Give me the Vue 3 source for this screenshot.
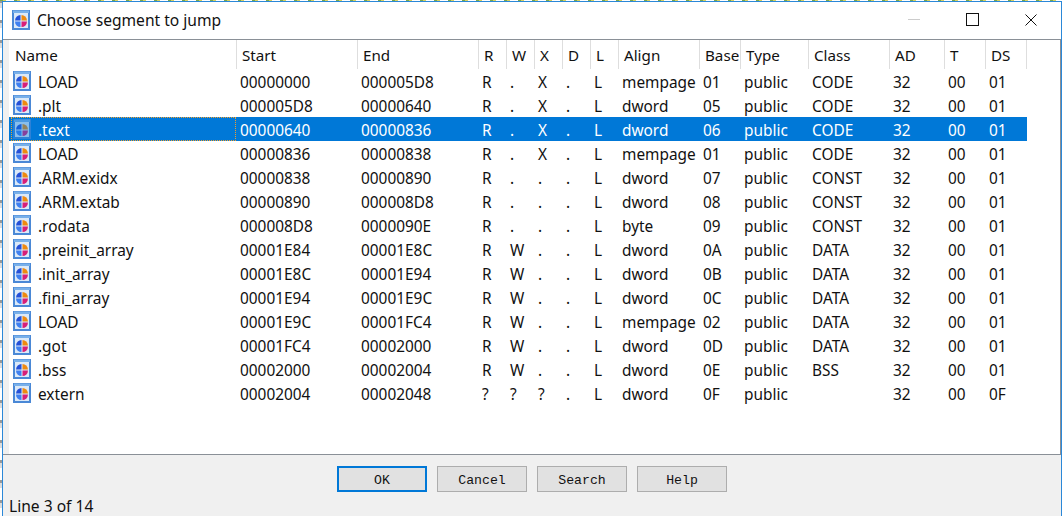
<script setup>
const columns = ['Name', 'Start', 'End', 'R', 'W', 'X', 'D', 'L', 'Align', 'Base', 'Type', 'Class', 'AD', 'T', 'DS']
const raw = `LOAD 00000000 000005D8 R . X . L mempage 01 public CODE 32 00 01
.plt 000005D8 00000640 R . X . L dword 05 public CODE 32 00 01
.text 00000640 00000836 R . X . L dword 06 public CODE 32 00 01
LOAD 00000836 00000838 R . X . L mempage 01 public CODE 32 00 01
.ARM.exidx 00000838 00000890 R . . . L dword 07 public CONST 32 00 01
.ARM.extab 00000890 000008D8 R . . . L dword 08 public CONST 32 00 01
.rodata 000008D8 0000090E R . . . L byte 09 public CONST 32 00 01
.preinit_array 00001E84 00001E8C R W . . L dword 0A public DATA 32 00 01
.init_array 00001E8C 00001E94 R W . . L dword 0B public DATA 32 00 01
.fini_array 00001E94 00001E9C R W . . L dword 0C public DATA 32 00 01
LOAD 00001E9C 00001FC4 R W . . L mempage 02 public DATA 32 00 01
.got 00001FC4 00002000 R W . . L dword 0D public DATA 32 00 01
.bss 00002000 00002004 R W . . L dword 0E public BSS 32 00 01
extern 00002004 00002048 ? ? ? . L dword 0F public - 32 00 0F`
const rows = raw.split('\n').map((l) => l.split(' ').map((c) => (c === '-' ? '' : c)))
const buttons = ['OK', 'Cancel', 'Search', 'Help']
</script>

<template>
  <div class="desk">
    <svg class="defs" width="0" height="0" aria-hidden="true">
      <symbol id="seg" viewBox="0 0 18 20">
        <rect x="0" y="0" width="18" height="20" fill="#4a88d6" />
        <rect x="1" y="0.5" width="16" height="2.5" fill="#78b0ea" />
        <rect x="2" y="3" width="14" height="15" fill="#dbe9f8" />
        <path d="M8.5 5A5.5 6 0 0 0 3 10.5h5.5z" fill="#2450d8" />
        <path d="M9.5 5A5.5 6 0 0 1 15 10.5H9.5z" fill="#ee8a10" />
        <path d="M8.5 11.5H3A5.5 5.5 0 0 0 8.5 17z" fill="#3f80f0" />
        <path d="M9.5 11.5H15A5.5 5.5 0 0 1 9.5 17z" fill="#d81f78" />
      </symbol>
    </svg>
    <div class="window">
      <header class="title">
        <svg class="icon"><use href="#seg" /></svg>
        <span class="title-text">Choose segment to jump</span>
        <div class="controls">
          <span class="minimize"></span>
          <span class="maximize"></span>
          <svg class="close" width="12" height="12" viewBox="0 0 12 12">
            <path d="M0.5 0.5L11.5 11.5M11.5 0.5L0.5 11.5" stroke="#111" stroke-width="1" fill="none" />
          </svg>
        </div>
      </header>

      <main class="list">
        <div class="grid head">
          <span v-for="c in columns" :key="c" class="hcell">{{ c }}</span>
        </div>
        <div v-for="(r, i) in rows" :key="i" class="grid row" :class="{ selected: i === 2 }">
          <span class="name">
            <svg class="icon small"><use href="#seg" /></svg>
            <span class="label">{{ r[0] }}</span>
          </span>
          <span v-for="(c, j) in r.slice(1)" :key="j" class="cell">{{ c }}</span>
        </div>
      </main>

      <footer class="footer">
        <div class="buttons">
          <button v-for="(b, i) in buttons" :key="b" class="btn" :class="{ primary: i === 0 }">{{ b }}</button>
        </div>
        <div class="status">Line 3 of 14</div>
      </footer>
    </div>
  </div>
</template>

<style>
html, body { margin: 0; overflow: hidden; }
</style>

<style scoped>
.desk {
  width: 1062px;
  height: 516px;
  box-sizing: border-box;
  padding: 1px 0 0 2px;
  overflow: hidden;
  background:
    repeating-linear-gradient(90deg, #7aa84a 0 3px, #d8d060 3px 6px, #fff 6px 14px) top left / 100% 1px no-repeat,
    repeating-linear-gradient(180deg, #999 0 3px, #ddd 3px 8px, #fff 8px 20px);
  font-family: "Noto Sans", "Open Sans", sans-serif;
  font-size: 15.4px;
  color: #111;
}
.defs { position: absolute; }
.window {
  width: 1060px;
  height: 515px;
  box-sizing: border-box;
  border: 1px solid #2b88d8;
  border-bottom: 0;
  display: flex;
  flex-direction: column;
  background: #f0f0f0;
}
.title {
  height: 37px;
  flex: none;
  display: flex;
  align-items: center;
  background: #fff;
  padding: 0 0 1px 9px;
  box-sizing: border-box;
}
.icon { width: 18px; height: 20px; flex: none; display: block; }
.title-text { margin-left: 7px; font-size: 15.6px; }
.controls {
  margin-left: auto;
  display: flex;
  align-items: center;
  padding: 0 24px 1px 0;
}
.minimize { width: 12px; height: 1px; background: #ccc; margin-right: 46px; }
.maximize { width: 11px; height: 11px; border: 1px solid #111; margin-right: 46px; }
.close { display: block; }

.list {
  height: 416px;
  flex: none;
  box-sizing: border-box;
  border-top: 1px solid #8a9097;
  border-bottom: 1px solid #8a9097;
  border-right: 1px solid #8a9097;
  padding-left: 6px;
  background: linear-gradient(#fff, #fff) 6px 0 no-repeat;
}
.grid {
  display: grid;
  grid-template-columns: 228px 121px 121px 28px 28px 28px 28px 28px 81px 41px 68px 81px 55px 41px 41px;
  width: 1018px;
}
.head { height: 29px; }
.hcell {
  box-sizing: border-box;
  height: 29px;
  line-height: 31px;
  padding-left: 5px;
  border-right: 1px solid #dedede;
  overflow: hidden;
  white-space: nowrap;
  font-size: 15.2px;
}
.hcell:first-child { padding-left: 6px; }
.row { height: 24px; grid-template-rows: 24px; line-height: 24px; }
.cell {
  box-sizing: border-box;
  height: 24px;
  padding: 2px 0 0 3px;
  white-space: nowrap;
  overflow: hidden;
}
.name {
  display: flex;
  align-items: center;
  height: 24px;
  padding-left: 4px;
  box-sizing: border-box;
  overflow: hidden;
}
.label { padding-top: 4px; white-space: nowrap; }
.name .small { margin-right: 7px; }
.selected { background: #0078d7; color: #fff; }
.selected .name {
  outline: 1px dotted #f0a030;
  outline-offset: -1px;
  margin-left: 2px;
  padding-left: 2px;
  width: 225px;
}
.selected .small { opacity: 0.62; }

.footer { flex: 1; display: flex; flex-direction: column; min-height: 0; }
.buttons {
  display: flex;
  justify-content: center;
  gap: 10px;
  padding-top: 11px;
}
.btn {
  width: 90px;
  height: 26px;
  box-sizing: border-box;
  padding: 2px 0 0;
  border: 1px solid #adadad;
  background: #e1e1e1;
  color: #111;
  font-family: "Liberation Mono", monospace;
  font-size: 13.2px;
}
.primary { border: 2px solid #0078d7; }
.status { margin-top: 4px; padding-left: 6px; line-height: 20px; font-size: 15.6px; }
</style>
